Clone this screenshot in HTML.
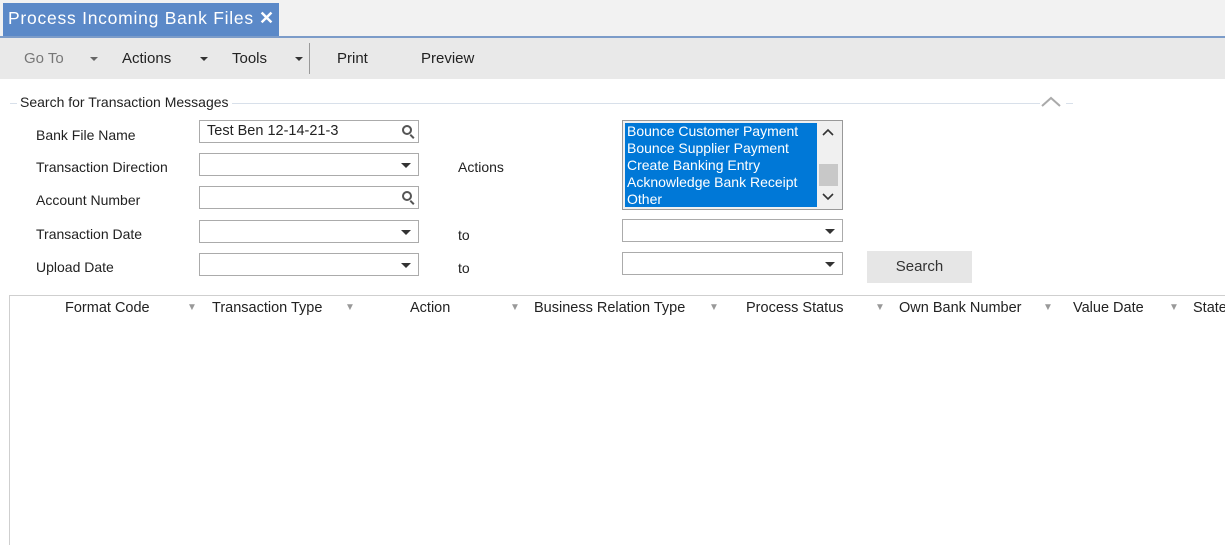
<!DOCTYPE html>
<html><head><meta charset="utf-8"><style>
*{margin:0;padding:0;box-sizing:border-box}
body{width:1225px;height:540px;overflow:hidden;background:#fff;font-family:"Liberation Sans",Arial,sans-serif;font-size:14px;color:#222;position:relative}
.a{position:absolute;white-space:nowrap}
.in{position:absolute;border:1px solid #ababab;background:#fff;height:23px;width:220px}
.dd::after{content:"";position:absolute;right:7px;top:9px;border-left:5px solid transparent;border-right:5px solid transparent;border-top:5px solid #333}
.mag{position:absolute;right:6px;top:4px;width:10px;height:10px;border:2px solid #555;border-radius:50%}
.mag::after{content:"";position:absolute;left:7px;top:7px;width:5px;height:2px;background:#555;transform:rotate(45deg);transform-origin:0 0}
.lbl{position:absolute;left:36px;font-size:14px}
.tb{position:absolute;top:50px;font-size:15px;color:#222}
.tri{position:absolute;border-left:4px solid transparent;border-right:4px solid transparent;border-top:4px solid #333}
.fl{position:absolute;top:302px;color:#999;font-size:10px}
.h{position:absolute;top:300px;font-size:14.5px;color:#222}
</style></head><body>
<div class="a" style="left:0;top:0;width:1225px;height:37px;background:#f2f2f2"></div>
<div class="a" style="left:3px;top:3px;width:276px;height:33px;background:#5b89c8"></div>
<div class="a" style="left:8px;top:8px;color:#fff;font-size:17.5px;letter-spacing:0.75px">Process Incoming Bank Files</div>
<div class="a" style="left:259px;top:8px;color:#fff;font-size:18px;font-weight:bold">✕</div>
<div class="a" style="left:0;top:36px;width:1225px;height:2px;background:#7c9cc9"></div>
<div class="a" style="left:0;top:38px;width:1225px;height:41px;background:#e9e9e9"></div>
<div class="tb" style="left:24px;color:#777">Go To</div>
<div class="tri" style="left:90px;top:57px;border-top-color:#666"></div>
<div class="tb" style="left:122px">Actions</div>
<div class="tri" style="left:200px;top:57px"></div>
<div class="tb" style="left:232px">Tools</div>
<div class="tri" style="left:295px;top:57px"></div>
<div class="a" style="left:309px;top:43px;width:1px;height:31px;background:#999"></div>
<div class="tb" style="left:337px">Print</div>
<div class="tb" style="left:421px">Preview</div>

<div class="a" style="left:10px;top:103px;width:1030px;height:1px;background:#d8e0ea"></div>
<div class="a" style="left:1066px;top:103px;width:7px;height:1px;background:#d8e0ea"></div>
<div class="a" style="left:17px;top:94px;background:#fff;padding:0 3px;font-size:14px">Search for Transaction Messages</div>
<svg class="a" style="left:1040px;top:96px" width="22" height="12"><path d="M2 10 L11 2 L20 10" fill="none" stroke="#aaa" stroke-width="2"/></svg>

<div class="lbl" style="top:127px">Bank File Name</div>
<div class="lbl" style="top:159px">Transaction Direction</div>
<div class="lbl" style="top:192px">Account Number</div>
<div class="lbl" style="top:226px">Transaction Date</div>
<div class="lbl" style="top:259px">Upload Date</div>

<div class="in" style="left:199px;top:120px"><span class="a" style="left:7px;top:2px;font-size:14.5px">Test Ben 12-14-21-3</span><div class="mag"></div></div>
<div class="in dd" style="left:199px;top:153px"></div>
<div class="in" style="left:199px;top:186px"><div class="mag"></div></div>
<div class="in dd" style="left:199px;top:220px"></div>
<div class="in dd" style="left:199px;top:253px"></div>

<div class="a" style="left:458px;top:159px">Actions</div>
<div class="a" style="left:458px;top:227px">to</div>
<div class="a" style="left:458px;top:260px">to</div>

<div class="a" style="left:622px;top:120px;width:221px;height:90px;border:1px solid #999;background:#f0f0f0">
 <div class="a" style="left:2px;top:2px;width:192px;height:84px;background:#0078d7;color:#fff;font-size:14px;line-height:17px;padding-left:2px">Bounce Customer Payment<br>Bounce Supplier Payment<br>Create Banking Entry<br>Acknowledge Bank Receipt<br>Other</div>
 <svg class="a" style="left:199px;top:6px" width="12" height="10"><path d="M1 8 L6 3 L11 8" fill="none" stroke="#333" stroke-width="1.6"/></svg>
 <div class="a" style="left:196px;top:43px;width:19px;height:22px;background:#c8c8c8"></div>
 <svg class="a" style="left:199px;top:71px" width="12" height="10"><path d="M1 2 L6 7 L11 2" fill="none" stroke="#333" stroke-width="1.6"/></svg>
</div>
<div class="in dd" style="left:622px;top:219px;width:221px"></div>
<div class="in dd" style="left:622px;top:252px;width:221px"></div>
<div class="a" style="left:867px;top:251px;width:105px;height:32px;background:#e6e6e6;text-align:center;line-height:32px;font-size:15px;color:#333">Search</div>

<div class="a" style="left:9px;top:295px;width:1220px;height:250px;border:1px solid #cfcfcf;border-right:none;border-bottom:none"></div>
<div class="h" style="left:65px">Format Code</div><div class="fl" style="left:187px">▼</div>
<div class="h" style="left:212px">Transaction Type</div><div class="fl" style="left:345px">▼</div>
<div class="h" style="left:410px">Action</div><div class="fl" style="left:510px">▼</div>
<div class="h" style="left:534px">Business Relation Type</div><div class="fl" style="left:709px">▼</div>
<div class="h" style="left:746px">Process Status</div><div class="fl" style="left:875px">▼</div>
<div class="h" style="left:899px">Own Bank Number</div><div class="fl" style="left:1043px">▼</div>
<div class="h" style="left:1073px">Value Date</div><div class="fl" style="left:1169px">▼</div>
<div class="h" style="left:1193px">State</div>
</body></html>
